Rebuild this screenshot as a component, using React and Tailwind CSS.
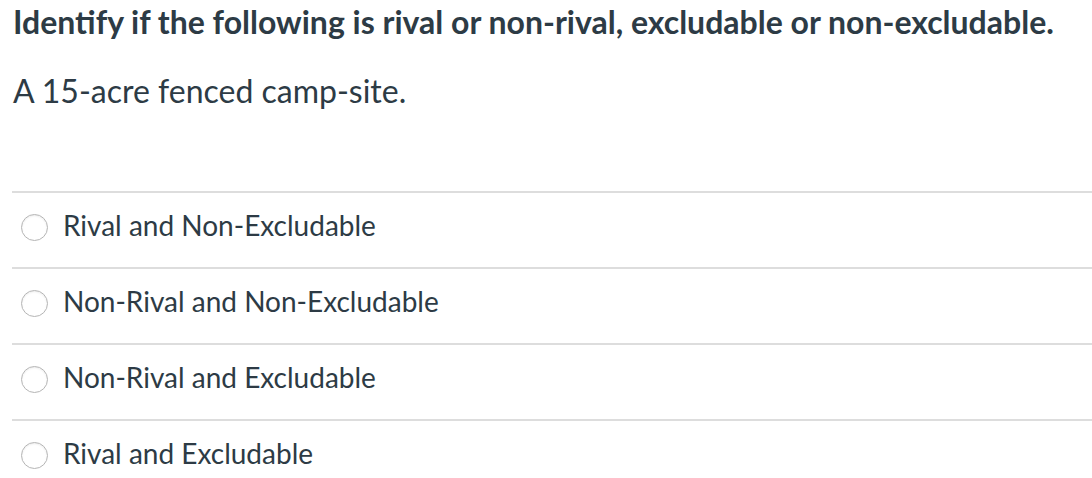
import React from "react";

const options = [
  "Rival and Non-Excludable",
  "Non-Rival and Non-Excludable",
  "Non-Rival and Excludable",
  "Rival and Excludable",
];

export default function App() {
  return (
    <div className="w-[1092px] h-[478px] bg-white overflow-hidden text-[#2D3B45]" style={{ fontFamily: "Lato, 'Open Sans', sans-serif" }}>
      <div className="pl-[13px]">
        <h1 className="text-[32px] font-bold leading-[44px] m-0">
          Identify if the following is rival or non-rival, excludable or non-excludable.
        </h1>
        <p className="text-[32px] leading-[44px] mt-[25px]">A 15-acre fenced camp-site.</p>
      </div>
      <div className="ml-[12px] mt-[78px]">
        {options.map((o) => (
          <div key={o} className="border-t-2 border-[#dddddd] h-[76px] flex items-center pl-[9px] pb-[6px]">
            <span className="w-[27px] h-[27px] rounded-full border border-[#b5b5b5] bg-white shadow-[inset_0_1px_2px_rgba(0,0,0,0.08)] shrink-0" />
            <span className="ml-[15px] text-[28px] leading-[34px] -mt-[4px]">{o}</span>
          </div>
        ))}
      </div>
    </div>
  );
}
